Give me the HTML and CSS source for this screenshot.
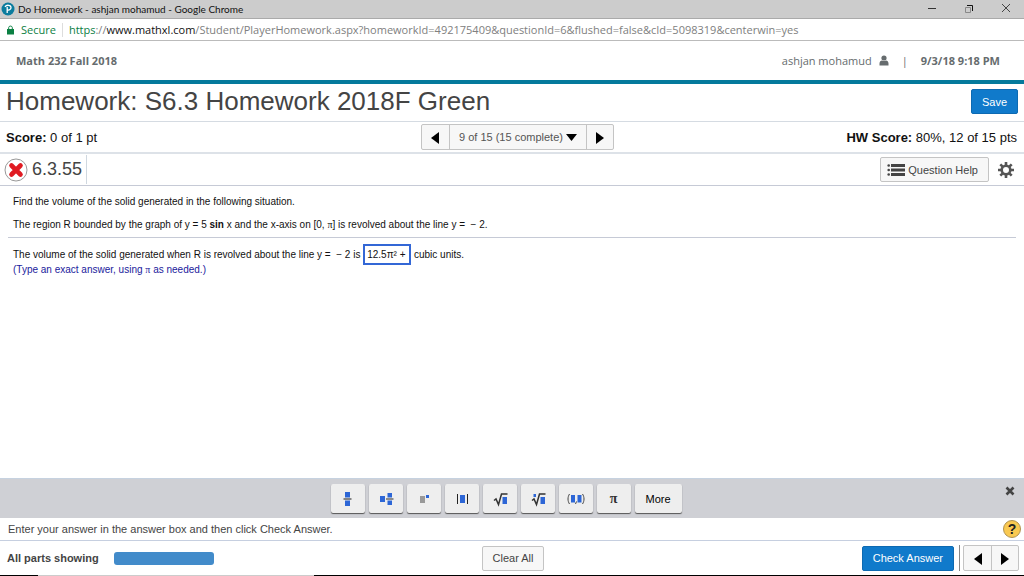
FILE: index.html
```html
<!DOCTYPE html>
<html lang="en">
<head>
  <meta charset="UTF-8">
  <meta name="viewport" content="width=device-width, initial-scale=1.0">
  <title>Do Homework - ashjan mohamud</title>
  <link rel="stylesheet" href="styles.css">
</head>
<body>

<div class="titlebar">
  <svg class="logo" width="14" height="14" viewBox="0 0 14 14">
    <circle cx="7" cy="7" r="6.5" fill="#0b7c9e"/>
    <path d="M4 4.800C5.500 2.500 10 2.800 10 5.500 10 7.500 8.200 8.200 6.800 8M6.200 5V11" fill="none" stroke="#fff" stroke-width="1.300"/>
  </svg>
  <span class="window-title">Do Homework - ashjan mohamud - Google Chrome</span>
  <div class="window-buttons">
    <button aria-label="Minimize"><svg width="10" height="10" viewBox="0 0 10 10"><path d="M1 4.500H9" stroke="#333"/></svg></button>
    <button aria-label="Restore"><svg width="10" height="10" viewBox="0 0 10 10"><path d="M1.500 3.500H6.500V8.500H1.500Z" fill="none" stroke="#888"/><path d="M3 1.500H8.500V7" fill="none" stroke="#111"/></svg></button>
    <button aria-label="Close"><svg width="10" height="10" viewBox="0 0 10 10"><path d="M1 0L9 8M9 0L1 8" stroke="#444"/></svg></button>
  </div>
</div>

<div class="address">
  <svg width="7" height="10" viewBox="0 0 7 10"><path d="M0 4H7V9.500H0Z" fill="#0b8043"/><path d="M1.700 4.500V2.500C1.700 .6 5.300 .6 5.300 2.500V4.500" fill="none" stroke="#0b8043"/></svg>
  <span class="secure">Secure</span>
  <span class="url"><span class="scheme">https</span>://<span class="host">www.mathxl.com</span>/Student/PlayerHomework.aspx?homeworkId=492175409&amp;questionId=6&amp;flushed=false&amp;cId=5098319&amp;centerwin=yes</span>
</div>

<header class="course">
  <strong>Math 232 Fall 2018</strong>
  <div class="user">
    <span>ashjan mohamud</span>
    <svg width="10" height="11" viewBox="0 0 10 11"><circle cx="5" cy="3" r="2.600" fill="#666c6e"/><path d="M.5 10.500V8.500C.5 6.500 1.800 5.500 3 5.500 4 6.300 6 6.300 7 5.500 8.200 5.500 9.500 6.500 9.500 8.500V10.500Z" fill="#666c6e"/></svg>
    <span class="bar">|</span>
    <strong>9/3/18 9:18 PM</strong>
  </div>
</header>

<div class="heading">
  <h1>Homework: S6.3 Homework 2018F Green</h1>
  <button class="primary save">Save</button>
</div>

<div class="scores">
  <div><b>Score:</b> 0 of 1 pt</div>
  <div class="pager">
    <button class="arrow" aria-label="Previous question"><svg width="8" height="12" viewBox="0 0 8 12"><path d="M8 0V12L0 6Z"/></svg></button>
    <button class="current">9 of 15 (15 complete) <svg width="11" height="7" viewBox="0 0 11 7"><path d="M0 0H11L5.500 7Z"/></svg></button>
    <button class="arrow" aria-label="Next question"><svg width="8" height="12" viewBox="0 0 8 12"><path d="M0 0V12L8 6Z"/></svg></button>
  </div>
  <div class="hw-score"><b>HW Score:</b> 80%, 12 of 15 pts</div>
</div>

<div class="question-bar">
  <div class="number">
    <svg width="24" height="24" viewBox="0 0 24 24"><circle cx="12" cy="12" r="11" fill="#fff" stroke="#999"/><path d="M7.500 7.500L16.500 16.500M16.500 7.500L7.500 16.500" stroke="#e01b22" stroke-width="4.600" stroke-linecap="round"/></svg>
    <span>6.3.55</span>
  </div>
  <div class="tools">
    <button class="plain help">
      <svg width="18" height="12" viewBox="0 0 18 12" fill="#444"><circle cx="1.700" cy="1.500" r="1.300"/><circle cx="1.700" cy="6" r="1.300"/><circle cx="1.700" cy="10.500" r="1.300"/><path d="M4 0H18V3H4ZM4 4.500H18V7.500H4ZM4 9H18V12H4Z"/></svg>
      Question Help
    </button>
    <button class="gear" aria-label="Settings"><svg width="16" height="16" viewBox="0 0 16 16"><circle cx="8" cy="8" r="4.300" fill="none" stroke="#555" stroke-width="2.600"/><path d="M8 0V3M8 13V16M0 8H3M13 8H16M2.300 2.300L4.400 4.400M11.600 11.600L13.700 13.700M13.700 2.300L11.600 4.400M4.400 11.600L2.300 13.700" stroke="#555" stroke-width="2.600"/></svg></button>
  </div>
</div>

<main>
  <div class="problem">
    <p>Find the volume of the solid generated in the following situation.</p>
    <p>The region R bounded by the graph of y = 5 <b>sin</b> x and the x-axis on [0, <span class="pi">π</span>] is revolved about the line y = &nbsp;− 2.</p>
  </div>
  <div class="answer">
    <label for="answer">The volume of the solid generated when R is revolved about the line y = &nbsp;− 2 is</label>
    <input type="text" id="answer" value="12.5π² +">
    <span>cubic units.</span>
    <div class="note">(Type an exact answer, using <span class="pi">π</span> as needed.)</div>
  </div>
</main>

<div class="palette">
  <button aria-label="Fraction"><svg width="18" height="16" viewBox="0 0 18 16"><path d="M6 1H11V6.500H6ZM6 9.500H11V15H6Z" fill="#2d66d6"/><path d="M4.500 8H12.500" stroke="#555" stroke-width="1.400"/></svg></button>
  <button aria-label="Mixed number"><svg width="18" height="16" viewBox="0 0 18 16"><path d="M3 5H8V11H3ZM10.500 2H15V6.500H10.500ZM10.500 9.500H15V14H10.500Z" fill="#2d66d6"/><path d="M9 8H16.500" stroke="#555" stroke-width="1.300"/></svg></button>
  <button aria-label="Exponent"><svg width="18" height="16" viewBox="0 0 18 16"><path d="M5 5H10V12H5Z" fill="#999"/><path d="M11 4H14V7H11Z" fill="#2d66d6"/></svg></button>
  <button aria-label="Absolute value"><svg width="18" height="16" viewBox="0 0 18 16"><path d="M7 4H12V12H7Z" fill="#2d66d6"/><path d="M4.500 3V13M14.500 3V13" stroke="#222"/></svg></button>
  <button aria-label="Square root"><svg width="18" height="16" viewBox="0 0 18 16"><path d="M11.500 6H16V13H11.500Z" fill="#2d66d6"/><path d="M3 9.500L5 8L7.500 13.500L10.500 3H16.500" fill="none" stroke="#333" stroke-width="1.500"/></svg></button>
  <button aria-label="Nth root"><svg width="18" height="16" viewBox="0 0 18 16"><path d="M11.500 6H16V13H11.500ZM4.500 3H7V6H4.500Z" fill="#2d66d6"/><path d="M3 9.500L5 8L7.500 13.500L10.500 3H16.500" fill="none" stroke="#333" stroke-width="1.500"/></svg></button>
  <button aria-label="Ordered pair"><svg width="18" height="16" viewBox="0 0 18 16"><path d="M4 4H8V11.500H4ZM10.500 4H14.500V11.500H10.500Z" fill="#2d66d6"/><path d="M2.500 3C.5 6 .5 10 2.500 13M15.500 3C17.500 6 17.500 10 15.500 13M9.500 10.500L8.500 13" fill="none" stroke="#444"/></svg></button>
  <button class="pi-key">π</button>
  <button class="more">More</button>
  <button class="close" aria-label="Close palette"><svg width="10" height="10" viewBox="0 0 10 10"><path d="M1.500 1.500L8.500 8.500M8.500 1.500L1.500 8.500" stroke="#444" stroke-width="2.600"/></svg></button>
</div>

<div class="hint">
  <span>Enter your answer in the answer box and then click Check Answer.</span>
  <button class="question-mark" aria-label="Help">?</button>
</div>

<footer>
  <div class="parts"><b>All parts showing</b><div class="progress"></div></div>
  <button class="plain clear">Clear All</button>
  <div class="check">
    <button class="primary submit">Check Answer</button>
    <div class="pager">
      <button class="arrow" aria-label="Previous"><svg width="8" height="12" viewBox="0 0 8 12"><path d="M8 0V12L0 6Z"/></svg></button>
      <button class="arrow" aria-label="Next"><svg width="8" height="12" viewBox="0 0 8 12"><path d="M0 0V12L8 6Z"/></svg></button>
    </div>
  </div>
</footer>
<div class="taskbar"><div class="taskbar-search"></div></div>

</body>
</html>
```
FILE: styles.css
```css
* {
  box-sizing: border-box;
}
body {
  margin: 0;
  min-height: 100vh;
  display: flex;
  flex-direction: column;
  font-family: "Liberation Sans", Arial, sans-serif;
  font-size: 13px;
  color: #111;
  background-color: #fff;
}
button {
  font-family: inherit;
  font-size: 11px;
  padding: 0;
  border: none;
  background: none;
  cursor: pointer;
}
svg {
  flex: none;
}

/* browser window */
.titlebar {
  display: flex;
  align-items: center;
  gap: 3px;
  height: 19px;
  padding: 0 13px 0 1px;
  background-color: #ccc;
  border-bottom: 1px solid #aaa;
  font-family: Lato, sans-serif;
  font-size: 10px;
}
.window-buttons {
  display: flex;
  gap: 27px;
  margin-left: auto;
}
.window-buttons button {
  display: flex;
}
.address {
  display: flex;
  align-items: center;
  height: 22px;
  padding-left: 7px;
  border-bottom: 1px solid #bbb;
  font-family: "Open Sans", sans-serif;
  font-size: 11px;
  white-space: nowrap;
}
.secure {
  margin-left: 7px;
  padding-right: 6px;
  color: #0b8043;
  border-right: 1px solid #ddd;
  line-height: 14px;
}
.url {
  margin-left: 6px;
  color: #808080;
}
.scheme {
  color: #0b8043;
}
.host {
  color: #111;
}

/* course header */
.course {
  display: flex;
  align-items: center;
  justify-content: space-between;
  height: 43px;
  padding: 0 24px 0 16px;
  border-bottom: 4px solid #047a9c;
  font-family: "Open Sans", sans-serif;
  font-size: 11px;
  color: #666c6e;
}
.user {
  display: flex;
  align-items: center;
}
.user svg {
  margin-left: 7px;
}
.bar {
  margin: 0 13px;
}
.heading {
  display: flex;
  align-items: center;
  justify-content: space-between;
  height: 38px;
  padding: 0 6px 2px;
  border-bottom: 1px solid #d5dbe2;
}
h1 {
  margin: 0;
  font-size: 26px;
  font-weight: normal;
  color: #444;
}
.primary {
  height: 25px;
  padding: 0 10px;
  color: #fff;
  background-color: #107acb;
  border: 1px solid #0d6ab2;
  border-radius: 2px;
}

/* score row */
.scores {
  display: grid;
  grid-template-columns: 1fr auto 1fr;
  align-items: center;
  height: 32px;
  padding: 0 7px 0 6px;
  border-bottom: 2px solid #dde2e8;
}
.scores .pager {
  margin-left: 12px;
}
.hw-score {
  text-align: right;
}
.pager {
  display: flex;
  height: 26px;
  border: 1px solid #c4c4c4;
  border-radius: 2px;
  background-color: #f7f7f7;
}
.pager button + button {
  border-left: 1px solid #c4c4c4;
}
.arrow {
  width: 27px;
}
.arrow svg {
  vertical-align: middle;
}
.current {
  padding: 0 9px;
  color: #555;
}
.current svg {
  fill: #000;
}
.question-bar {
  display: flex;
  align-items: center;
  justify-content: space-between;
  height: 32px;
  padding: 0 10px 0 4px;
  border-bottom: 1px solid #c6cad6;
}
.number {
  display: flex;
  align-items: center;
  gap: 4px;
  height: 29px;
  padding-right: 4px;
  border-right: 1px solid #d0d8e0;
  font-size: 18px;
  color: #444;
}
.tools {
  display: flex;
  align-items: center;
  gap: 9px;
}
.gear {
  display: flex;
}
.plain {
  height: 25px;
  padding: 0 10px;
  color: #444;
  background-color: #f7f7f7;
  border: 1px solid #c4c4c4;
  border-radius: 2px;
}
.help {
  display: flex;
  align-items: center;
  gap: 3px;
  padding: 0 10px 0 6px;
}

/* exercise */
main {
  flex: 1;
  padding: 0 8px;
  font-size: 10px;
  line-height: 15px;
}
.problem {
  padding: 8px 5px 5px;
  border-bottom: 1px solid #c6cad6;
}
.problem p {
  margin: 0 0 8px;
}
.problem p:last-child {
  margin: 0;
}
.answer {
  padding: 9px 5px;
}
.answer input {
  width: 48px;
  height: 21px;
  margin: -4px 0;
  padding: 0 2px;
  font-family: inherit;
  font-size: 10px;
  color: #111;
  border: 2px solid #3367d6;
  outline: none;
}
.pi {
  font-family: "Liberation Serif", serif;
}
.note {
  color: #1a1a9c;
}

/* math palette */
.palette {
  position: relative;
  display: flex;
  align-items: center;
  justify-content: center;
  gap: 4px;
  height: 40px;
  padding-right: 12px;
  background-color: #cfd0d5;
  border-top: 1px solid #c6d2e0;
}
.palette button {
  width: 34px;
  height: 29px;
  background-color: #eee;
  border-radius: 2px;
  box-shadow: 0 1px 1px #555;
}
.palette button svg {
  vertical-align: middle;
}
.palette .pi-key {
  font-family: "Liberation Serif", serif;
  font-size: 14px;
  font-weight: bold;
  color: #333;
}
.palette .more {
  width: 47px;
  font-size: 11px;
}
.palette .close {
  position: absolute;
  top: 5px;
  right: 8px;
  width: 12px;
  height: 12px;
  line-height: 10px;
  background: none;
  box-shadow: none;
}
.hint {
  display: flex;
  align-items: center;
  justify-content: space-between;
  height: 23px;
  padding: 0 3px 0 8px;
  border-bottom: 1px solid #c6cfe0;
  font-size: 11px;
  color: #444;
}
.question-mark {
  width: 18px;
  height: 18px;
  font-weight: bold;
  font-size: 14px;
  line-height: 16px;
  color: #222;
  background-color: #f9c951;
  border: 1px solid #b09250;
  border-radius: 50%;
}

/* footer */
footer {
  display: grid;
  grid-template-columns: 1fr auto 1fr;
  align-items: center;
  height: 34px;
  padding: 0 5px 0 7px;
  font-size: 11px;
  color: #444;
}
.parts {
  display: flex;
  align-items: center;
  gap: 15px;
}
.progress {
  width: 100px;
  height: 13px;
  background-color: #428bca;
  border-radius: 3px;
}
.check {
  display: flex;
  align-items: center;
  justify-content: flex-end;
}
.check .pager {
  position: relative;
  margin-left: 9px;
}
.check .pager::before {
  content: "";
  position: absolute;
  top: -1px;
  left: -5px;
  height: 26px;
  border-left: 1px solid #888;
}
.taskbar {
  height: 1px;
  padding-left: 38px;
  background-color: #000;
}
.taskbar-search {
  width: 276px;
  height: 1px;
  background-color: #ccc;
}
```
